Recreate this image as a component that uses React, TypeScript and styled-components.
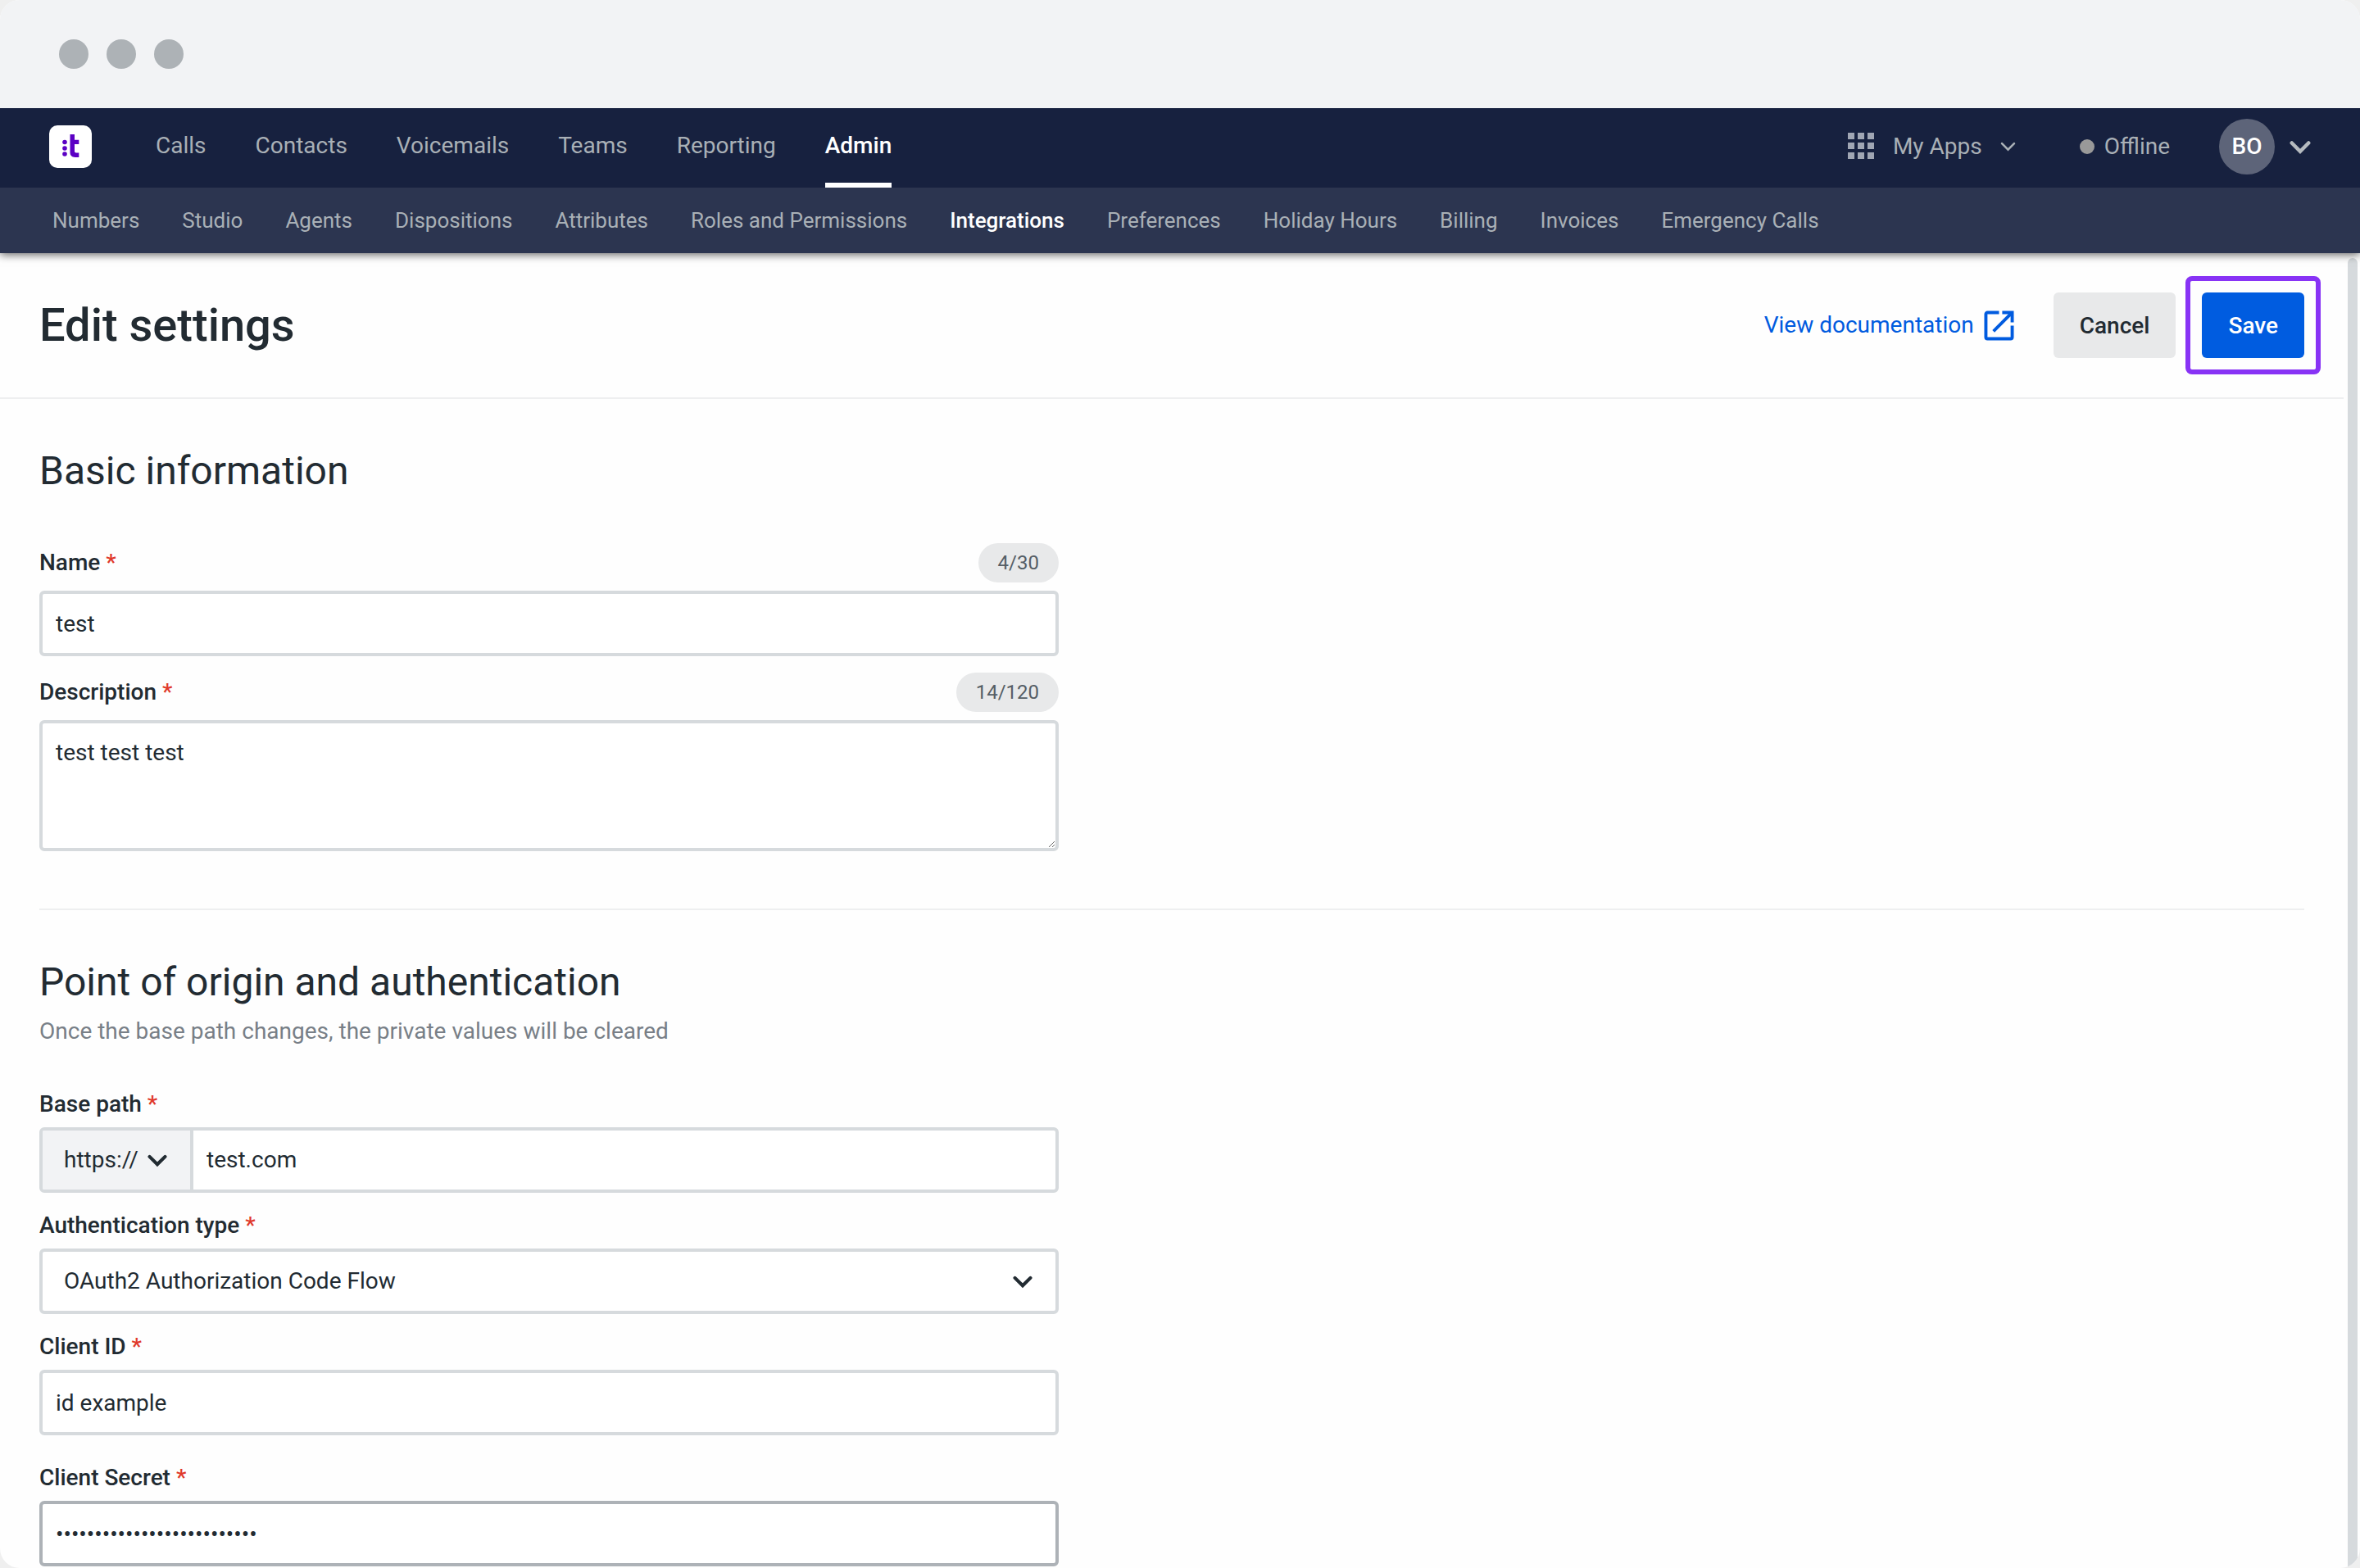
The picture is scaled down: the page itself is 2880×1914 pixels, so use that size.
import React, { useState } from 'react';
import styled, { createGlobalStyle } from 'styled-components';

const GlobalStyle = createGlobalStyle`
  * { box-sizing: border-box; }
  html { background: #efefef; }
  body {
    margin: 0;
    font-family: Roboto, "Liberation Sans", sans-serif;
    font-size: 28px;
    line-height: 40px;
    color: #222b32;
  }
  button, input, select, textarea { font: inherit; color: inherit; }
  a { color: inherit; text-decoration: none; }
  h1, h2, p, ul { margin: 0; padding: 0; }
  svg { display: block; flex: none; }
`;

const Window = styled.div`
  height: 100vh;
  display: flex;
  flex-direction: column;
  overflow: hidden;
  background: #fefefe;
  border-radius: 24px;
`;

const TitleBar = styled.div`
  position: relative;
  z-index: 2;
  flex: none;
  display: flex;
  gap: 22px;
  padding: 48px 72px;
  background: #f2f3f5;
`;

const WindowDot = styled.span`
  width: 36px;
  height: 36px;
  border-radius: 50%;
  background: #adb2b6;
`;

const Header = styled.header`
  flex: none;
  position: relative;
  z-index: 1;
  box-shadow: 0 2px 10px rgba(0, 0, 0, 0.6);
`;

const TopBar = styled.div`
  display: flex;
  align-items: stretch;
  height: 97px;
  padding: 0 60px;
  background: #17213f;
  color: #a9b0b6;
`;

const Logo = styled.a`
  align-self: center;
  padding-bottom: 4px;
  margin-right: 78px;
`;

const MainNav = styled.nav`
  display: flex;
  gap: 60px;
`;

const MainLink = styled.a<{ $active: boolean }>`
  display: flex;
  align-items: center;
  padding-top: 4px;
  padding-bottom: ${p => (p.$active ? 4 : 10)}px;
  border-bottom: ${p => (p.$active ? '6px solid #fff' : '0')};
  color: ${p => (p.$active ? '#fff' : 'inherit')};
  font-weight: ${p => (p.$active ? 500 : 400)};
`;

const Tools = styled.div`
  display: flex;
  align-items: center;
  margin-left: auto;
  padding-bottom: 4px;
`;

const ToolButton = styled.button<{ $gap: number }>`
  display: flex;
  align-items: center;
  gap: ${p => p.$gap}px;
  padding: 0;
  border: 0;
  background: none;
`;

const Status = styled.div`
  display: flex;
  align-items: center;
  gap: 12px;
  margin: 0 60px 0 78px;
`;

const StatusDot = styled.span`
  width: 18px;
  height: 18px;
  border-radius: 50%;
  background: #999;
`;

const Avatar = styled.span`
  display: grid;
  place-items: center;
  width: 68px;
  height: 68px;
  border-radius: 50%;
  background: #5d6479;
  color: #fff;
  font-weight: 500;
`;

const SubNav = styled.nav`
  display: flex;
  align-items: center;
  gap: 52px;
  height: 80px;
  padding: 0 64px;
  background: #2c3550;
  color: #a9b0b6;
  font-size: 26px;
`;

const SubLink = styled.a<{ $active: boolean }>`
  color: ${p => (p.$active ? '#fff' : 'inherit')};
  font-weight: ${p => (p.$active ? 500 : 400)};
`;

const Body = styled.div`
  flex: 1;
  display: flex;
  min-height: 0;
`;

const Page = styled.main`
  flex: 1;
  min-width: 0;
  overflow: hidden;
`;

const ScrollTrack = styled.div`
  flex: none;
  width: 20px;
  padding: 6px 3px 0 5px;
`;

const ScrollThumb = styled.div`
  height: 100%;
  border-radius: 6px 6px 0 0;
  background: #d6dadd;
`;

const PageHead = styled.div`
  display: flex;
  align-items: center;
  height: 178px;
  padding: 0 28px 0 48px;
  border-bottom: 2px solid #eeeff0;
`;

const PageTitle = styled.h1`
  font-size: 56px;
  line-height: 64px;
  font-weight: 500;
`;

const DocLink = styled.a`
  display: flex;
  align-items: center;
  gap: 12px;
  margin-left: auto;
  margin-right: 48px;
  color: #005bdf;
`;

const Button = styled.button<{ $primary?: boolean }>`
  height: 80px;
  padding: 2px 32px 0;
  border: 0;
  border-radius: 6px;
  background: ${p => (p.$primary ? '#005ce0' : '#e8e9ea')};
  color: ${p => (p.$primary ? '#fff' : '#222b32')};
  font-weight: 500;
`;

const Highlight = styled.div`
  margin-left: 12px;
  padding: 14px;
  border: 6px solid #8833f5;
  border-radius: 8px;
`;

const Section = styled.section`
  margin: 0 48px;
  padding: 60px 0 70px;
  & + & { border-top: 2px solid #eeeff0; }
`;

const SectionTitle = styled.h2`
  font-size: 48px;
  line-height: 56px;
  font-weight: 400;
`;

const Hint = styled.p`
  margin-top: 12px;
  color: #787f87;
`;

const Form = styled.div<{ $top: number }>`
  display: flex;
  flex-direction: column;
  width: 1244px;
  max-width: 100%;
  margin-top: ${p => p.$top}px;
`;

const Field = styled.div<{ $gap?: number }>`
  display: flex;
  flex-direction: column;
  gap: 8px;
  margin-bottom: ${p => p.$gap ?? 20}px;
`;

const LabelRow = styled.div`
  display: flex;
  align-items: center;
  justify-content: space-between;
  padding-bottom: 2px;
`;

const Label = styled.label`
  font-weight: 500;
`;

const Required = styled.span`
  color: #e0392b;
`;

const Counter = styled.span`
  padding: 4px 24px;
  border-radius: 24px;
  background: #e8e9ea;
  color: #555e66;
  font-size: 24px;
`;

const boxBorder = '4px solid #d6dadd';

const TextInput = styled.input<{ $hovered?: boolean }>`
  width: 100%;
  height: 80px;
  padding: 0 16px;
  border: ${boxBorder};
  border-color: ${p => (p.$hovered ? '#adb2b7' : '#d6dadd')};
  border-radius: 6px;
  background: #fff;
  outline: 0;
`;

const TextArea = styled.textarea`
  display: block;
  width: 100%;
  height: 160px;
  padding: 16px;
  border: ${boxBorder};
  border-radius: 6px;
  background: #fff;
  outline: 0;
  resize: both;
`;

const Group = styled.div`
  display: flex;
  height: 80px;
  border: ${boxBorder};
  border-radius: 6px;
  background: #fff;
  overflow: hidden;
`;

const GroupInput = styled.input`
  flex: 1;
  min-width: 0;
  padding: 0 16px;
  border: 0;
  background: none;
  outline: 0;
`;

const SelectWrap = styled.div<{ $addon?: boolean }>`
  display: grid;
  align-items: center;
  flex: ${p => (p.$addon ? 'none' : 1)};
  width: ${p => (p.$addon ? '184px' : 'auto')};
  border-right: ${p => (p.$addon ? boxBorder : '0')};
  background: ${p => (p.$addon ? '#f2f3f5' : 'none')};
  & > * { grid-area: 1 / 1; }
  & > svg {
    justify-self: end;
    margin-right: 28px;
    pointer-events: none;
  }
`;

const Select = styled.select`
  appearance: none;
  width: 100%;
  height: 100%;
  padding: 0 26px;
  border: 0;
  background: none;
  outline: 0;
`;

const Chevron = ({ width = 24, stroke = 4.5, color = '#222b32' }) => (
  <svg
    width={width}
    height={width}
    viewBox="0 0 26 26"
    fill="none"
    stroke={color}
    strokeWidth={stroke}
    strokeLinecap="round"
    aria-hidden
  >
    <path d="M2.75 8.500L13 18.750L23.250 8.500" />
  </svg>
);

const LogoMark = () => (
  <svg width="52" height="52" viewBox="0 0 52 52" aria-hidden>
    <rect width="52" height="52" rx="10" fill="#fff" />
    <g fill="#5b00c4">
      <circle cx="19" cy="20.500" r="2.800" />
      <circle cx="19" cy="28" r="2.800" />
      <circle cx="19" cy="35" r="2.800" />
      <path d="M25.500 11H31v6.700h5.300V23H31v8.600c0 1.300.6 1.900 1.900 1.900h3.400V39h-4.500c-4.200 0-6.300-2.200-6.300-6.200z" />
    </g>
  </svg>
);

const AppsIcon = () => (
  <svg width="33" height="33" viewBox="0 0 33 33" fill="#a0a6b3" aria-hidden>
    {[0, 12, 24].map(y => [0, 12, 24].map(x => <rect key={`${x}-${y}`} x={x} y={y} width="8" height="8" />))}
  </svg>
);

const OpenIcon = () => (
  <svg width="37" height="37" viewBox="0 0 38 38" fill="none" stroke="#005bdf" strokeWidth="4" aria-hidden>
    <path d="M19 2.500H4.500a2 2 0 0 0-2 2v29a2 2 0 0 0 2 2h29a2 2 0 0 0 2-2V19" />
    <path d="M23 2.500h12.500V15M35 3L12 26" />
  </svg>
);

const mainLinks = ['Calls', 'Contacts', 'Voicemails', 'Teams', 'Reporting', 'Admin'];
const subLinks = [
  'Numbers', 'Studio', 'Agents', 'Dispositions', 'Attributes', 'Roles and Permissions',
  'Integrations', 'Preferences', 'Holiday Hours', 'Billing', 'Invoices', 'Emergency Calls',
];

const FieldLabel = ({ id, text }: { id: string; text: string }) => (
  <Label htmlFor={id}>{text} <Required>*</Required></Label>
);

export default function App() {
  const [name, setName] = useState('test');
  const [description, setDescription] = useState('test test test');

  return (
    <>
      <GlobalStyle />
      <Window>
        <TitleBar><WindowDot /><WindowDot /><WindowDot /></TitleBar>
        <Header>
          <TopBar>
            <Logo href="#" aria-label="Home"><LogoMark /></Logo>
            <MainNav>
              {mainLinks.map(l => <MainLink key={l} href="#" $active={l === 'Admin'}>{l}</MainLink>)}
            </MainNav>
            <Tools>
              <ToolButton $gap={22}>
                <AppsIcon />
                <span>My Apps</span>
                <Chevron width={19} stroke={3.5} color="#a9b0b6" />
              </ToolButton>
              <Status><StatusDot />Offline</Status>
              <ToolButton $gap={18} aria-label="Account">
                <Avatar>BO</Avatar>
                <Chevron width={26} color="#b5babf" />
              </ToolButton>
            </Tools>
          </TopBar>
          <SubNav>
            {subLinks.map(l => <SubLink key={l} href="#" $active={l === 'Integrations'}>{l}</SubLink>)}
          </SubNav>
        </Header>
        <Body>
          <Page>
            <PageHead>
              <PageTitle>Edit settings</PageTitle>
              <DocLink href="#">View documentation<OpenIcon /></DocLink>
              <Button>Cancel</Button>
              <Highlight><Button $primary>Save</Button></Highlight>
            </PageHead>
            <Section>
              <SectionTitle>Basic information</SectionTitle>
              <Form $top={60}>
                <Field>
                  <LabelRow>
                    <FieldLabel id="name" text="Name" />
                    <Counter>{name.length}/30</Counter>
                  </LabelRow>
                  <TextInput id="name" value={name} onChange={e => setName(e.target.value)} />
                </Field>
                <Field $gap={0}>
                  <LabelRow>
                    <FieldLabel id="description" text="Description" />
                    <Counter>{description.length}/120</Counter>
                  </LabelRow>
                  <TextArea id="description" value={description} onChange={e => setDescription(e.target.value)} />
                </Field>
              </Form>
            </Section>
            <Section>
              <SectionTitle>Point of origin and authentication</SectionTitle>
              <Hint>Once the base path changes, the private values will be cleared</Hint>
              <Form $top={49}>
                <Field>
                  <FieldLabel id="path" text="Base path" />
                  <Group>
                    <SelectWrap $addon>
                      <Select aria-label="Protocol"><option>https://</option></Select>
                      <Chevron />
                    </SelectWrap>
                    <GroupInput id="path" defaultValue="test.com" />
                  </Group>
                </Field>
                <Field>
                  <FieldLabel id="auth" text="Authentication type" />
                  <Group>
                    <SelectWrap>
                      <Select id="auth"><option>OAuth2 Authorization Code Flow</option></Select>
                      <Chevron />
                    </SelectWrap>
                  </Group>
                </Field>
                <Field $gap={32}>
                  <FieldLabel id="client-id" text="Client ID" />
                  <TextInput id="client-id" defaultValue="id example" />
                </Field>
                <Field>
                  <FieldLabel id="secret" text="Client Secret" />
                  <TextInput id="secret" type="password" defaultValue="abcdefghijklmnopqrstuvwxyz" $hovered />
                </Field>
              </Form>
            </Section>
          </Page>
          <ScrollTrack><ScrollThumb /></ScrollTrack>
        </Body>
      </Window>
    </>
  );
}
